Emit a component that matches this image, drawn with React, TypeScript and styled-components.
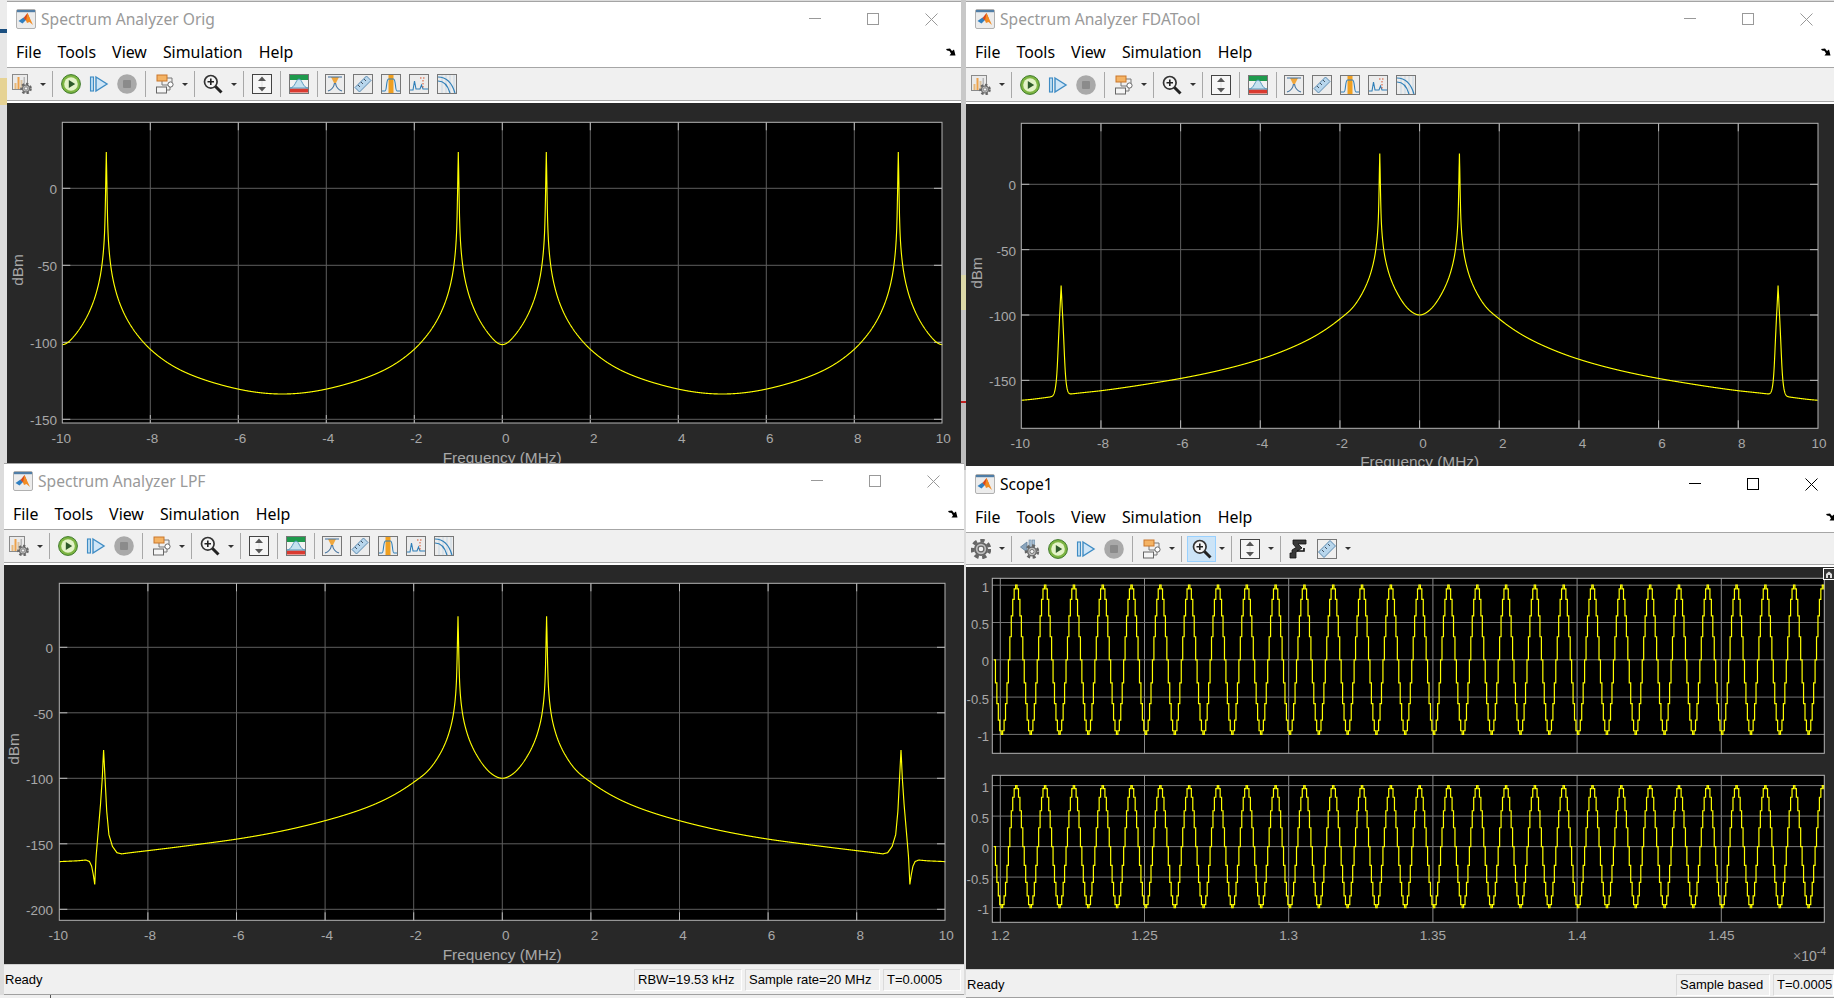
import React from "react";
import styled, { createGlobalStyle } from "styled-components";

const GlobalStyle = createGlobalStyle`
  html, body {
    margin: 0;
    padding: 0;
    background: #d8d8d8;
    overflow: hidden;
  }
`;

const Desktop = styled.div`
  position: relative;
  display: flex;
  width: 1834px;
  height: 998px;
  overflow: hidden;
  background: #dcdcdc;
`;

const LeftStrip = styled.div`
  display: flex;
  flex-direction: column;
  width: 7px;
  height: 100%;
  flex: none;
`;

const StripPart = styled.div<{ $h: number; $c: string }>`
  height: ${(p) => p.$h}px;
  background: ${(p) => p.$c};
  flex: none;
`;

const MidGap = styled.div`
  width: 954px;
  flex: none;
`;

const MidStrip = styled.div`
  width: 5px;
  height: 470px;
  flex: none;
  background: linear-gradient(
    #c8c8c8 0 275px,
    #dcd8a8 275px 310px,
    #c4c4c4 310px 401px,
    #c02020 401px 403px,
    #bdbdbd 403px
  );
`;

const PeekBar = styled.div`
  position: absolute;
  left: 0;
  top: 995px;
  width: 966px;
  height: 3px;
  background: #efefef;
  border-left: 50px solid #efefef;
  box-sizing: border-box;

  &::after {
    content: "";
    display: block;
    width: 1px;
    height: 3px;
    background: #555;
  }
`;

const Win = styled.div<{ $x: number; $y: number; $w: number; $h: number; $z: number }>`
  position: absolute;
  left: ${(p) => p.$x}px;
  top: ${(p) => p.$y}px;
  width: ${(p) => p.$w}px;
  height: ${(p) => p.$h}px;
  z-index: ${(p) => p.$z};
  display: flex;
  flex-direction: column;
  box-sizing: border-box;
  background: #fff;
  overflow: hidden;
`;

const TopEdge = styled.div<{ $on: boolean }>`
  height: 1px;
  flex: none;
  background: ${(p) => (p.$on ? "#a4a4a4" : "#fff")};
`;

const TitleBar = styled.div`
  display: flex;
  align-items: center;
  height: 35px;
  flex: none;
  box-sizing: border-box;
  padding: 0 0 1px 9px;
`;

const TitleText = styled.span<{ $active: boolean }>`
  margin-left: 5px;
  font-family: "Noto Sans", "Liberation Sans", sans-serif;
  font-size: 15.6px;
  color: ${(p) => (p.$active ? "#000" : "#999")};
`;

const Controls = styled.div<{ $inset: number }>`
  display: flex;
  margin-left: auto;
  margin-right: ${(p) => p.$inset}px;
`;

const ControlCell = styled.div`
  display: flex;
  width: 58.5px;
  justify-content: center;
  align-items: center;
`;

const MenuBar = styled.div`
  display: flex;
  align-items: center;
  height: 31px;
  flex: none;
  box-sizing: border-box;
  padding: 0 0 1px 9px;
  gap: 16px;
  border-bottom: 1px solid #a6a6a6;
  font-family: "Noto Sans", "Liberation Sans", sans-serif;
  font-size: 15.9px;
  color: #000;
`;

const DockArrow = styled.svg<{ $inset: number }>`
  margin-left: auto;
  margin-right: ${(p) => p.$inset + 5}px;
  flex: none;
`;

const Toolbar = styled.div<{ $h: number }>`
  display: flex;
  align-items: center;
  height: ${(p) => p.$h}px;
  flex: none;
  box-sizing: border-box;
  gap: 8px;
  padding-left: 5px;
  background: #f0f0f0;
  border-bottom: 1px solid #a6a6a6;
  margin-bottom: 2px;
`;

const Caret = styled.span`
  width: 0;
  height: 0;
  flex: none;
  margin-right: -2px;
  border-left: 3px solid transparent;
  border-right: 3px solid transparent;
  border-top: 3px solid #333;
`;

const Separator = styled.span<{ $tight?: boolean }>`
  width: 1px;
  height: 26px;
  flex: none;
  background: #a8a8a8;
  margin-right: ${(p) => (p.$tight ? "-1px" : "0")};
`;

const ActiveTool = styled.span`
  display: flex;
  align-items: center;
  justify-content: center;
  width: 29px;
  height: 26px;
  flex: none;
  box-sizing: border-box;
  margin: 0 -5px 0 -3px;
  background: #cce4f7;
  border: 1px solid #99d1ff;
`;

const Canvas = styled.div`
  flex: 1;
  min-height: 0;
  background: #282828;
  overflow: hidden;

  svg {
    display: block;
  }

  text {
    font-family: "Liberation Sans", Arial, sans-serif;
    fill: #a8a8a8;
  }
`;

const StatusBar = styled.div<{ $h: number; $end: number; $lift: number }>`
  display: flex;
  align-items: center;
  height: ${(p) => p.$h}px;
  flex: none;
  box-sizing: border-box;
  gap: 3px;
  padding: ${(p) => p.$lift}px ${(p) => p.$end}px 0 1px;
  background: #f0f0f0;
  border-top: 1px solid #d0d0d0;
  border-bottom: 1px solid #a0a0a0;
  font-family: "Liberation Sans", Arial, sans-serif;
  font-size: 13px;
  color: #000;
`;

const Ready = styled.span`
  margin-right: auto;
`;

const StatusCell = styled.span<{ $w: number }>`
  display: flex;
  align-items: center;
  width: ${(p) => p.$w}px;
  height: 22px;
  flex: none;
  box-sizing: border-box;
  padding-left: 3px;
  border: 1px solid #dadada;
  border-right-color: #fff;
  border-bottom-color: #fff;
  white-space: nowrap;
`;

const AppIcon = () => (
  <svg width="20" height="20" viewBox="0 0 20 20">
    <rect x="0.5" y="0.5" width="19" height="19" rx="1.5" fill="#ececec" stroke="#b0b0b0" />
    <rect x="1" y="1" width="18" height="2.2" fill="#4f7da6" />
    <polygon points="2.5,12 7.5,8.5 10,11 6.5,14.5" fill="#2f7fc1" />
    <polygon points="7.5,9 11.5,4 14,10 10.5,12" fill="#d8481c" />
    <polygon points="11.5,4 17,16 13.5,13 11,14 10,11.5" fill="#f28b22" />
  </svg>
);

const MinGlyph = ({ c }: { c: string }) => (
  <svg width="12" height="12" viewBox="0 0 12 12">
    <line x1="0" y1="5.5" x2="12" y2="5.5" stroke={c} strokeWidth="1" />
  </svg>
);

const MaxGlyph = ({ c }: { c: string }) => (
  <svg width="12" height="12" viewBox="0 0 12 12">
    <rect x="0.5" y="0.5" width="11" height="11" fill="none" stroke={c} strokeWidth="1" />
  </svg>
);

const CloseGlyph = ({ c }: { c: string }) => (
  <svg width="13" height="13" viewBox="0 0 13 13">
    <path d="M0.5 0.5 L12.5 12.5 M12.5 0.5 L0.5 12.5" stroke={c} strokeWidth="1" />
  </svg>
);

const Dock = ({ inset }: { inset: number }) => (
  <DockArrow $inset={inset} width="10" height="8" viewBox="0 0 10 8">
    <path d="M0 1 L4 0.5 L6 3 L8 1.5 L9.5 7.5 L3.5 7.5 L5 5.5 L3.5 3 L1 2.5 Z" fill="#000" />
  </DockArrow>
);

const GearMark = ({ cx, cy, r, c = "#666" }: { cx: number; cy: number; r: number; c?: string }) => (
  <g>
    <circle cx={cx} cy={cy} r={r} fill="none" stroke={c} strokeWidth={r * 0.42} strokeDasharray={`${r * 0.5} ${r * 0.42}`} />
    <circle cx={cx} cy={cy} r={r * 0.72} fill="#bdbdbd" stroke={c} strokeWidth={r * 0.22} />
    <circle cx={cx} cy={cy} r={r * 0.34} fill="#f2f2f2" stroke={c} strokeWidth={r * 0.14} />
  </g>
);

const Ico = ({ children }: { children: React.ReactNode }) => (
  <svg width="20" height="20" viewBox="0 0 20 20" style={{ flex: "none" }}>
    {children}
  </svg>
);

const ChartGearIcon = () => (
  <Ico>
    <rect x="0.5" y="0.5" width="15" height="15" fill="#eaeaea" stroke="#8a8a8a" />
    <rect x="2.5" y="9" width="2" height="6" fill="#e8b878" />
    <rect x="5.5" y="3" width="2" height="12" fill="#eda24a" />
    <rect x="8.5" y="6" width="2" height="9" fill="#d9c2a0" />
    <rect x="11.5" y="3" width="1.5" height="12" fill="#b8b8b8" />
    <GearMark cx={14} cy={14.5} r={4.8} />
  </Ico>
);

const GearIcon = () => (
  <Ico>
    <GearMark cx={10} cy={10} r={8.5} />
  </Ico>
);

const BackIcon = () => (
  <Ico>
    <polygon points="0.5,8 7,3 7,13" fill="#8aa4bc" stroke="#5f7f9c" strokeWidth="0.8" />
    <rect x="9" y="1" width="2.2" height="9" fill="#a8c0d6" stroke="#6c8aa6" strokeWidth="0.6" />
    <rect x="12.5" y="1" width="2.2" height="9" fill="#a8c0d6" stroke="#6c8aa6" strokeWidth="0.6" />
    <GearMark cx={12} cy={12.5} r={6} />
  </Ico>
);

const PlayIcon = () => (
  <Ico>
    <circle cx="10" cy="10" r="9.4" fill="#7db542" stroke="#3f7a2c" strokeWidth="1" />
    <circle cx="10" cy="10" r="6.8" fill="#e4f3c8" />
    <polygon points="7.8,6 14.2,10 7.8,14" fill="#2e5a2a" />
  </Ico>
);

const StepIcon = () => (
  <Ico>
    <rect x="1.5" y="3" width="3" height="14" fill="#bcdcf2" stroke="#3f8cc4" strokeWidth="1.1" />
    <polygon points="7,3 18,10 7,17" fill="#d0e6f7" stroke="#3f8cc4" strokeWidth="1.4" />
  </Ico>
);

const StopIcon = () => (
  <Ico>
    <circle cx="10" cy="10" r="9.8" fill="#a9a9a9" />
    <rect x="6" y="6" width="8" height="8" rx="1" fill="#8b8b8b" />
  </Ico>
);

const BlockIcon = () => (
  <Ico>
    <path d="M8 7 V11 H16 M13 4 H18 V8 M12 16 H16 V13" fill="none" stroke="#777" strokeWidth="1" />
    <rect x="3" y="1" width="10" height="6" fill="#f4b364" stroke="#c9772b" />
    <rect x="2.5" y="13" width="10" height="6" fill="#f5f5f5" stroke="#666" />
    <circle cx="16.5" cy="10.5" r="2.6" fill="#fff" stroke="#666" />
  </Ico>
);

const ZoomIcon = () => (
  <Ico>
    <line x1="12" y1="12" x2="18.5" y2="18.5" stroke="#222" strokeWidth="3" />
    <circle cx="7.8" cy="7.8" r="6.3" fill="#f4f4f4" stroke="#333" strokeWidth="1.7" />
    <path d="M4.5 7.8 H11 M7.8 4.5 V11" stroke="#222" strokeWidth="1.6" />
  </Ico>
);

const ScaleIcon = () => (
  <Ico>
    <rect x="0.5" y="0.5" width="19" height="19" fill="#f6f6f6" stroke="#444" />
    <polygon points="10,2.5 6,7 14,7" fill="#555" />
    <polygon points="10,17.5 6,13 14,13" fill="#555" />
    <line x1="10" y1="7" x2="10" y2="13" stroke="#ddd" />
  </Ico>
);

const SpectrumIcon = () => (
  <Ico>
    <rect x="0.5" y="0.5" width="19" height="19" fill="#f2f2f2" stroke="#777" />
    <rect x="1" y="1" width="18" height="5" fill="#1e9a4c" />
    <rect x="1" y="14.5" width="18" height="4" fill="#da3a30" />
    <path d="M1 14 C6 14 7 5 10 5 S14 14 19 14 Z" fill="#c6e2f0" stroke="#4a90b8" strokeWidth="0.9" />
  </Ico>
);

const Instrument = ({ children }: { children: React.ReactNode }) => (
  <Ico>
    <rect x="0.5" y="0.5" width="19" height="19" fill="#ececec" stroke="#777" />
    {children}
  </Ico>
);

const HourglassIcon = () => (
  <Instrument>
    <polygon points="6,3 14,3 11,9 9,9" fill="#f0a63c" />
    <path d="M3 3 H17 M9.5 9 C9 13 6 16 3 17 M10.5 9 C11 13 14 16 17 17" fill="none" stroke="#3f6f9c" strokeWidth="1.1" />
  </Instrument>
);

const RulerIcon = () => (
  <Instrument>
    <polygon points="2,13.5 13.5,2 18,6.5 6.5,18" fill="#b8d6ec" stroke="#5a8ab0" />
    <path d="M5 11 L7 13 M8 8 L10 10 M11 5 L13 7" stroke="#456" strokeWidth="1" />
  </Instrument>
);

const BandIcon = () => (
  <Instrument>
    <rect x="7.5" y="1" width="5" height="18" fill="#f0a020" />
    <path d="M1 17 H4 C6 17 5 5 7.5 5 H12.5 C15 5 14 17 16 17 H19" fill="none" stroke="#2f7fb8" strokeWidth="1.1" />
  </Instrument>
);

const PeaksIcon = () => (
  <Instrument>
    <path d="M1 16 H4 L5.5 7 L7 15 H11 L12.5 11 L14 15 H19" fill="none" stroke="#2f7fb8" strokeWidth="1.1" />
    <path d="M11 4 H17 M14 6 V14" stroke="#d8502a" strokeWidth="1" strokeDasharray="1.5 1.5" />
  </Instrument>
);

const CurvesIcon = () => (
  <Instrument>
    <path d="M5 1 V19 M9 1 V19 M13 1 V19 M17 1 V19" stroke="#c8d8e4" strokeWidth="1" />
    <path d="M1 3 C10 3 15 9 18 19 M1 7 C7 7 11 12 13 19" fill="none" stroke="#2f7fb8" strokeWidth="1.2" />
  </Instrument>
);

const CursorsIcon = () => (
  <Ico>
    <path d="M4 1 H17 V5 H9 L13 9 L7 13 V19 H1 V14 H3 V11 L7 8.5 L4 5 Z" fill="#3a3a3a" stroke="#111" strokeWidth="0.8" />
    <path d="M8 12 H15 V9" fill="none" stroke="#111" strokeWidth="1.6" />
  </Ico>
);

const ScopeRulerIcon = () => (
  <Ico>
    <rect x="0.5" y="0.5" width="19" height="19" fill="#efefef" stroke="#777" />
    <polygon points="1.5,13 13,1.5 18.5,7 7,18.5" fill="#b8d6ec" stroke="#5a8ab0" />
    <path d="M5 11 L7 13 M8 8 L10 10 M11 5 L13 7" stroke="#456" strokeWidth="1" />
  </Ico>
);

const SpectrumTools = () => (
  <>
    <ChartGearIcon />
    <Caret />
    <Separator />
    <PlayIcon />
    <StepIcon />
    <StopIcon />
    <Separator />
    <BlockIcon />
    <Caret />
    <Separator />
    <ZoomIcon />
    <Caret />
    <Separator />
    <ScaleIcon />
    <Separator />
    <SpectrumIcon />
    <Separator $tight />
    <HourglassIcon />
    <RulerIcon />
    <BandIcon />
    <PeaksIcon />
    <CurvesIcon />
  </>
);

const ScopeTools = () => (
  <>
    <GearIcon />
    <Caret />
    <Separator />
    <BackIcon />
    <PlayIcon />
    <StepIcon />
    <StopIcon />
    <Separator />
    <BlockIcon />
    <Caret />
    <Separator />
    <ActiveTool>
      <ZoomIcon />
    </ActiveTool>
    <Caret />
    <Separator />
    <ScaleIcon />
    <Caret />
    <Separator />
    <CursorsIcon />
    <ScopeRulerIcon />
    <Caret />
  </>
);

const MENU = ["File", "Tools", "View", "Simulation", "Help"];

type WindowProps = {
  title: string;
  x: number;
  y: number;
  w: number;
  h: number;
  z: number;
  inset: number;
  toolH: number;
  edge?: boolean;
  active?: boolean;
  tools: React.ReactNode;
  children: React.ReactNode;
  status?: React.ReactNode;
};

const ScopeWindow = ({ title, x, y, w, h, z, inset, toolH, edge = true, active = false, tools, children, status }: WindowProps) => {
  const c = active ? "#000" : "#999";
  return (
    <Win $x={x} $y={y} $w={w} $h={h} $z={z}>
      <TopEdge $on={edge} />
      <TitleBar>
        <AppIcon />
        <TitleText $active={active}>{title}</TitleText>
        <Controls $inset={inset}>
          <ControlCell>
            <MinGlyph c={c} />
          </ControlCell>
          <ControlCell>
            <MaxGlyph c={c} />
          </ControlCell>
          <ControlCell>
            <CloseGlyph c={c} />
          </ControlCell>
        </Controls>
      </TitleBar>
      <MenuBar>
        {MENU.map((m) => (
          <span key={m}>{m}</span>
        ))}
        <Dock inset={inset} />
      </MenuBar>
      <Toolbar $h={toolH}>{tools}</Toolbar>
      <Canvas>{children}</Canvas>
      {status}
    </Win>
  );
};

// dB tables are keyed on distance from a peak in MHz
type Table = [number, number][];

const NEAR: Table = [
  [0, 23.6],
  [0.008, 12],
  [0.015, 0],
  [0.04, -29],
  [0.1, -50],
  [0.2, -65],
  [0.4, -81],
  [0.7, -95],
];

const ORIG_TAIL: Table = [...NEAR, [1, -104.5], [1.75, -119], [3, -131], [4, -137], [5, -142.5], [6, -147], [7, -151], [12, -165], [22, -180]];
const FDA_TAIL: Table = [...NEAR, [1, -103], [2, -122], [3, -134], [5, -149], [7, -158.5], [7.7, -161], [8.3, -164], [9, -167], [11, -170], [21, -180]];
const LPF_TAIL: Table = [...NEAR, [1, -103], [2, -121.5], [3, -132.5], [5, -147], [7, -155.5], [7.6, -158], [9.6, -170], [21, -185]];
const SIDE: Table = [
  [0, -77.4],
  [0.01, -84],
  [0.035, -99],
  [0.06, -115],
  [0.12, -150],
  [0.2, -168],
  [0.3, -185],
  [1, -260],
  [20, -400],
];
const LPF_EDGE: Table = [
  [8.6, -157.6],
  [8.7, -156.8],
  [8.8, -152],
  [8.88, -143],
  [8.93, -125],
  [8.96, -105],
  [8.99, -85],
  [9, -78.5],
  [9.01, -85],
  [9.03, -100],
  [9.07, -120],
  [9.12, -140],
  [9.17, -160],
  [9.2, -181],
  [9.23, -174],
  [9.27, -167],
  [9.32, -163.5],
  [9.4, -162.4],
  [9.6, -163],
  [10, -163.6],
];

const logKey = (d: number) => Math.log10(d + 0.003);

// monotone cubic through the table, on a log distance axis
const logLookup = (t: Table, d: number) => {
  let i = 1;
  while (i < t.length - 1 && d > t[i][0]) i++;
  const x0 = logKey(t[i - 1][0]);
  const x1 = logKey(t[i][0]);
  const h = x1 - x0;
  const slope = (j: number) => (t[j + 1][1] - t[j][1]) / (logKey(t[j + 1][0]) - logKey(t[j][0]));
  const s = slope(i - 1);
  const blend = (a: number, b: number) => (2 * a * b) / (a + b);
  const m0 = i > 1 ? blend(slope(i - 2), s) : s;
  const m1 = i < t.length - 1 ? blend(s, slope(i)) : s;
  const u = Math.min((logKey(d) - x0) / h, 1);
  const u2 = u * u;
  const u3 = u2 * u;
  return (2 * u3 - 3 * u2 + 1) * t[i - 1][1] + (u3 - 2 * u2 + u) * h * m0 + (-2 * u3 + 3 * u2) * t[i][1] + (u3 - u2) * h * m1;
};

const lineLookup = (t: Table, f: number) => {
  for (let i = 1; i < t.length; i++) {
    if (f <= t[i][0]) {
      return t[i - 1][1] + ((f - t[i - 1][0]) / (t[i][0] - t[i - 1][0])) * (t[i][1] - t[i - 1][1]);
    }
  }
  return t[t.length - 1][1];
};

const sumPower = (vals: number[]) => 10 * Math.log10(vals.reduce((s, v) => s + Math.pow(10, v / 10), 0));

const origCurve = (f: number) =>
  sumPower([-11, -9, -1, 1, 9, 11].map((p) => logLookup(ORIG_TAIL, Math.abs(f - p))));

const fdaCurve = (f: number) =>
  sumPower([
    logLookup(FDA_TAIL, Math.abs(f - 1)),
    logLookup(FDA_TAIL, Math.abs(f + 1)),
    logLookup(SIDE, Math.abs(f - 9)),
    logLookup(SIDE, Math.abs(f + 9)),
  ]);

const lpfCurve = (f: number) => {
  if (Math.abs(f) >= 8.6) return lineLookup(LPF_EDGE, Math.abs(f));
  return sumPower([logLookup(LPF_TAIL, Math.abs(f - 1)), logLookup(LPF_TAIL, Math.abs(f + 1))]);
};

type Box = { x: number; y: number; w: number; h: number };

type SpectrumAxes = {
  left: number;
  right: number;
  top: number;
  bottom: number;
  perMHz: number;
  zeroY: number;
  perDb: number;
  yTicks: number[];
  labelEdge: number;
  dBmX: number;
  dBmY: number;
  tickLabelY: number;
  freqY: number;
};

const xLabelShift = (v: number) => {
  if (v === -10) return -1;
  if (v === 10) return 1;
  return v < 0 ? 2 : 3.5;
};

const XTICKS = [-10, -8, -6, -4, -2, 0, 2, 4, 6, 8, 10];
const GRID = "#5e5e5e";
const TICK = "#b8b8b8";
const FRAME = "#b4b4b4";

const SpectrumPlot = ({ box, a, curve }: { box: Box; a: SpectrumAxes; curve: (f: number) => number }) => {
  const zeroX = (a.left + a.right) / 2;
  const px = (f: number) => a.left + (f + 10) * a.perMHz;
  const py = (db: number) => a.zeroY - db * a.perDb;
  let d = "";
  for (let k = -2500; k <= 2500; k++) {
    const f = k * 0.004;
    d += `${k === -2500 ? "M" : "L"}${px(f).toFixed(2)} ${py(curve(f)).toFixed(2)}`;
  }
  return (
    <svg width={box.w} height={box.h} viewBox={`${box.x} ${box.y} ${box.w} ${box.h}`}>
      <rect x={a.left} y={a.top} width={a.right - a.left} height={a.bottom - a.top} fill="#000" />
      {XTICKS.slice(1, -1).map((v) => (
        <g key={v}>
          <line x1={px(v)} x2={px(v)} y1={a.top} y2={a.bottom} stroke={GRID} />
          <line x1={px(v)} x2={px(v)} y1={a.top} y2={a.top + 8} stroke={TICK} />
          <line x1={px(v)} x2={px(v)} y1={a.bottom - 8} y2={a.bottom} stroke={TICK} />
        </g>
      ))}
      {a.yTicks.map((v) => (
        <g key={v}>
          <line x1={a.left} x2={a.right} y1={py(v)} y2={py(v)} stroke={GRID} />
          <line x1={a.left} x2={a.left + 8} y1={py(v)} y2={py(v)} stroke={TICK} />
          <line x1={a.right - 8} x2={a.right} y1={py(v)} y2={py(v)} stroke={TICK} />
          <text x={a.labelEdge} y={py(v) + 6} fontSize="13.5" textAnchor="end">
            {v}
          </text>
        </g>
      ))}
      <path d={d} fill="none" stroke="#ffff00" strokeWidth="1.15" />
      <rect x={a.left} y={a.top} width={a.right - a.left} height={a.bottom - a.top} fill="none" stroke={FRAME} />
      {XTICKS.map((v) => (
        <text key={v} x={px(v) + xLabelShift(v)} y={a.tickLabelY + 4.5} fontSize="13.5" textAnchor="middle">
          {v}
        </text>
      ))}
      <text x={zeroX} y={a.freqY + 5} fontSize="15.4" textAnchor="middle">
        Frequency (MHz)
      </text>
      <text x={a.dBmX} y={a.dBmY} fontSize="15.4" textAnchor="middle" transform={`rotate(-90 ${a.dBmX} ${a.dBmY})`}>
        dBm
      </text>
    </svg>
  );
};

const stairs = (y0: number, amp: number, xStart: number, xEnd: number) => {
  const step = 1.4405;
  let d = `M${xStart} ${y0}`;
  for (let k = 0; xStart + k * step < xEnd; k++) {
    const x = xStart + k * step;
    const y = y0 + amp * Math.sin((2 * Math.PI * k) / 20);
    d += `L${x.toFixed(2)} ${y.toFixed(2)}L${Math.min(x + step, xEnd).toFixed(2)} ${y.toFixed(2)}`;
  }
  return d;
};

const SCOPE_X = [1.2, 1.25, 1.3, 1.35, 1.4, 1.45];
const SCOPE_Y = [1, 0.5, 0, -0.5, -1];
const SCOPE_LEFT = 992.3;
const SCOPE_RIGHT = 1824.3;

const scopeX = (i: number) => 1000.3 + i * 144.2;

const ScopeAxes = ({ top, bottom, oneY, unit }: { top: number; bottom: number; oneY: number; unit: number }) => {
  const zero = oneY + unit;
  return (
    <g>
      <rect x={SCOPE_LEFT} y={top} width={SCOPE_RIGHT - SCOPE_LEFT} height={bottom - top} fill="#000" />
      {SCOPE_X.map((_, i) => (
        <line key={i} x1={scopeX(i)} x2={scopeX(i)} y1={top} y2={bottom} stroke="#8a8a8a" />
      ))}
      {SCOPE_Y.map((v) => {
        const y = zero - v * unit;
        return (
          <g key={v}>
            <line x1={SCOPE_LEFT} x2={SCOPE_RIGHT} y1={y} y2={y} stroke="#757575" />
            <text x="989" y={y + 6.5} fontSize="13" textAnchor="end">
              {v}
            </text>
          </g>
        );
      })}
      <path d={stairs(zero, unit, 994, SCOPE_RIGHT)} fill="none" stroke="#ffff00" strokeWidth="1.2" />
      <rect x={SCOPE_LEFT} y={top} width={SCOPE_RIGHT - SCOPE_LEFT} height={bottom - top} fill="none" stroke={FRAME} />
    </g>
  );
};

const ScopePlot = ({ box }: { box: Box }) => (
  <svg width={box.w} height={box.h} viewBox={`${box.x} ${box.y} ${box.w} ${box.h}`}>
    <ScopeAxes top={578.3} bottom={753.3} oneY={585.2} unit={74.6} />
    <ScopeAxes top={775.3} bottom={922.3} oneY={785.6} unit={61} />
    {SCOPE_X.map((v, i) => (
      <text key={v} x={scopeX(i)} y="940" fontSize="13.5" textAnchor="middle">
        {v}
      </text>
    ))}
    <text x="1793" y="961" fontSize="14">
      <tspan fill="#8a8a8a">×</tspan>
      10
      <tspan fontSize="10.5" dy="-6">
        -4
      </tspan>
    </text>
    <rect x="1823.5" y="568.5" width="11" height="11" fill="#333" stroke="#fff" />
    <path d="M1826 578 V574 L1829 571.5 L1832 574 V578 H1830 V575 H1828 V578 Z" fill="#ddd" />
  </svg>
);

export default function App() {
  return (
    <Desktop>
      <GlobalStyle />
      <LeftStrip>
        <StripPart $h={29} $c="#ececec" />
        <StripPart $h={4} $c="#1b4f80" />
        <StripPart $h={45} $c="#e6e6e6" />
        <StripPart $h={27} $c="#e6d394" />
        <StripPart $h={893} $c="#dcdcdc" />
      </LeftStrip>
      <MidGap />
      <MidStrip />
      <PeekBar />

      <ScopeWindow title="Spectrum Analyzer Orig" x={7} y={1} w={954} h={470} z={1} inset={0} toolH={33} tools={<SpectrumTools />}>
        <SpectrumPlot
          box={{ x: 7, y: 103, w: 954, h: 368 }}
          curve={origCurve}
          a={{
            left: 62.3,
            right: 942,
            top: 122.3,
            bottom: 423,
            perMHz: 44,
            zeroY: 188.3,
            perDb: 1.54,
            yTicks: [0, -50, -100, -150],
            labelEdge: 57,
            dBmX: 23,
            dBmY: 270,
            tickLabelY: 438,
            freqY: 458,
          }}
        />
      </ScopeWindow>

      <ScopeWindow title="Spectrum Analyzer FDATool" x={966} y={1} w={868} h={470} z={1} inset={-2} toolH={34} tools={<SpectrumTools />}>
        <SpectrumPlot
          box={{ x: 966, y: 104, w: 868, h: 367 }}
          curve={fdaCurve}
          a={{
            left: 1021.3,
            right: 1818,
            top: 123.3,
            bottom: 428.3,
            perMHz: 39.83,
            zeroY: 184.3,
            perDb: 1.307,
            yTicks: [0, -50, -100, -150],
            labelEdge: 1016,
            dBmX: 982,
            dBmY: 273,
            tickLabelY: 443,
            freqY: 462,
          }}
        />
      </ScopeWindow>

      <ScopeWindow
        title="Spectrum Analyzer LPF"
        x={4}
        y={463}
        w={960}
        h={532}
        z={2}
        inset={1}
        toolH={33}
        tools={<SpectrumTools />}
        status={
          <StatusBar $h={31} $end={3} $lift={0}>
            <Ready>Ready</Ready>
            <StatusCell $w={108}>RBW=19.53 kHz</StatusCell>
            <StatusCell $w={135}>Sample rate=20 MHz</StatusCell>
            <StatusCell $w={78}>T=0.0005</StatusCell>
          </StatusBar>
        }
      >
        <SpectrumPlot
          box={{ x: 4, y: 565, w: 960, h: 399 }}
          curve={lpfCurve}
          a={{
            left: 59.3,
            right: 945,
            top: 583.3,
            bottom: 920.3,
            perMHz: 44.3,
            zeroY: 647.3,
            perDb: 1.31,
            yTicks: [0, -50, -100, -150, -200],
            labelEdge: 53,
            dBmX: 19,
            dBmY: 749,
            tickLabelY: 935,
            freqY: 955,
          }}
        />
      </ScopeWindow>

      <ScopeWindow
        title="Scope1"
        x={966}
        y={466}
        w={868}
        h={532}
        z={2}
        inset={-7}
        toolH={32}
        edge={false}
        active
        tools={<ScopeTools />}
        status={
          <StatusBar $h={29} $end={0} $lift={2}>
            <Ready>Ready</Ready>
            <StatusCell $w={94}>Sample based</StatusCell>
            <StatusCell $w={61}>T=0.0005</StatusCell>
          </StatusBar>
        }
      >
        <ScopePlot box={{ x: 966, y: 567, w: 868, h: 402 }} />
      </ScopeWindow>
    </Desktop>
  );
}
